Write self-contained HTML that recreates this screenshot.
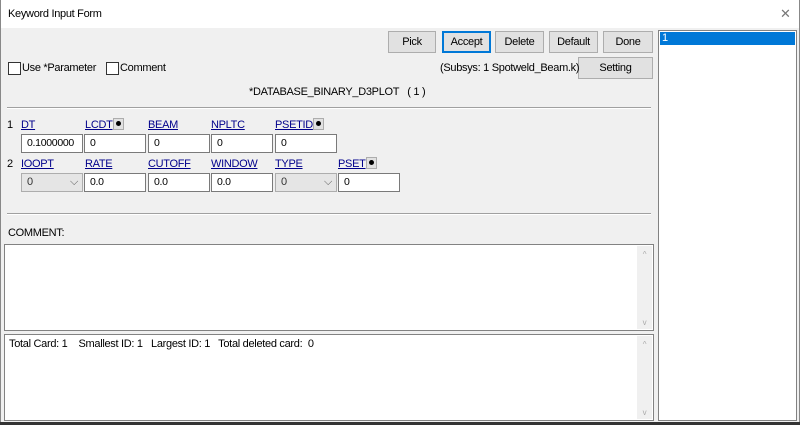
<!DOCTYPE html>
<html><head><style>
*{box-sizing:border-box;margin:0;padding:0}
body{width:800px;height:425px;background:#f0f0f0;font-family:"Liberation Sans",sans-serif;font-size:11px;letter-spacing:-0.3px;color:#000;position:relative;overflow:hidden}
.a{position:absolute}
.title{left:0;top:0;width:800px;height:28px;background:#fff}
.btn{position:absolute;background:#e1e1e1;border:1px solid #adadad;text-align:center;line-height:20px;font-size:11px}
.cb{position:absolute;width:13px;height:13px;border:1px solid #333;background:#fff}
.lbl{position:absolute;color:#00008b;text-decoration:underline;font-size:11px}
.inp{position:absolute;height:19px;background:#fff;border:1px solid #7a7a7a;padding-left:5px;line-height:17px;font-size:10.5px}
.sel{position:absolute;height:19px;background:#e5e5e5;border:1px solid #adadad;padding-left:5px;line-height:17px;color:#333}
.dot{position:absolute;width:11px;height:12px;background:#e1e1e1;border:1px solid #adadad}
.dot:after{content:"";position:absolute;left:2px;top:2px;width:5px;height:5px;border-radius:50%;background:#000}
.box{position:absolute;background:#fff;border:1px solid #828282}
.sb{position:absolute;right:1px;top:1px;bottom:1px;width:15px;background:#f0f0f0;color:#aaa;font-size:8px;text-align:center}
</style></head><body>
<div class="a title"></div>
<div class="a" style="left:0;top:0;width:1px;height:425px;background:#888"></div>
<div class="a" style="left:799px;top:0;width:1px;height:425px;background:#888"></div>
<div class="a" style="left:0;top:422px;width:800px;height:3px;background:#333"></div>
<div class="a" style="left:8px;top:8px;font-size:11px">Keyword Input Form</div>
<div class="a" style="left:780px;top:6px;font-size:13px;color:#777">✕</div>

<div class="btn" style="left:388px;top:31px;width:48px;height:22px">Pick</div>
<div class="btn" style="left:442px;top:31px;width:49px;height:22px;border:2px solid #0078d7;line-height:18px">Accept</div>
<div class="btn" style="left:495px;top:31px;width:49px;height:22px">Delete</div>
<div class="btn" style="left:549px;top:31px;width:49px;height:22px">Default</div>
<div class="btn" style="left:603px;top:31px;width:50px;height:22px">Done</div>
<div class="btn" style="left:578px;top:57px;width:75px;height:22px">Setting</div>
<div class="a" style="left:440px;top:62px">(Subsys: 1 Spotweld_Beam.k)</div>

<div class="cb" style="left:8px;top:62px"></div><div class="a" style="left:22px;top:62px">Use *Parameter</div>
<div class="cb" style="left:106px;top:62px"></div><div class="a" style="left:120px;top:62px">Comment</div>
<div class="a" style="left:249px;top:86px">*DATABASE_BINARY_D3PLOT &nbsp;&nbsp;( 1 )</div>
<div class="a" style="left:7px;top:107px;width:644px;height:2px;border-top:1px solid #a0a0a0;border-bottom:1px solid #fff"></div>

<div class="a" style="left:7px;top:119px">1</div>
<div class="lbl" style="left:21px;top:119px">DT</div>
<div class="lbl" style="left:85px;top:119px">LCDT</div><div class="dot" style="left:113px;top:118px"></div>
<div class="lbl" style="left:148px;top:119px">BEAM</div>
<div class="lbl" style="left:211px;top:119px">NPLTC</div>
<div class="lbl" style="left:275px;top:119px">PSETID</div><div class="dot" style="left:313px;top:118px"></div>
<div class="inp" style="left:21px;top:134px;width:62px">0.1000000</div>
<div class="inp" style="left:84px;top:134px;width:62px">0</div>
<div class="inp" style="left:148px;top:134px;width:62px">0</div>
<div class="inp" style="left:211px;top:134px;width:62px">0</div>
<div class="inp" style="left:275px;top:134px;width:62px">0</div>

<div class="a" style="left:7px;top:158px">2</div>
<div class="lbl" style="left:21px;top:158px">IOOPT</div>
<div class="lbl" style="left:85px;top:158px">RATE</div>
<div class="lbl" style="left:148px;top:158px">CUTOFF</div>
<div class="lbl" style="left:211px;top:158px">WINDOW</div>
<div class="lbl" style="left:275px;top:158px">TYPE</div>
<div class="lbl" style="left:338px;top:158px">PSET</div><div class="dot" style="left:366px;top:157px"></div>
<div class="sel" style="left:21px;top:173px;width:62px">0<span style="position:absolute;right:4px;top:0;color:#555">⌵</span></div>
<div class="inp" style="left:84px;top:173px;width:62px">0.0</div>
<div class="inp" style="left:148px;top:173px;width:62px">0.0</div>
<div class="inp" style="left:211px;top:173px;width:62px">0.0</div>
<div class="sel" style="left:275px;top:173px;width:62px">0<span style="position:absolute;right:4px;top:0;color:#555">⌵</span></div>
<div class="inp" style="left:338px;top:173px;width:62px">0</div>

<div class="a" style="left:7px;top:213px;width:644px;height:2px;border-top:1px solid #a0a0a0;border-bottom:1px solid #fff"></div>
<div class="a" style="left:8px;top:227px">COMMENT:</div>
<div class="box" style="left:4px;top:244px;width:650px;height:87px"><div class="sb"><div style="margin-top:4px">^</div><div style="position:absolute;bottom:2px;width:100%">v</div></div></div>
<div class="box" style="left:4px;top:334px;width:650px;height:87px"><div style="position:absolute;left:4px;top:3px">Total Card: 1 &nbsp;&nbsp; Smallest ID: 1 &nbsp; Largest ID: 1 &nbsp; Total deleted card: &nbsp;0</div><div class="sb"><div style="margin-top:4px">^</div><div style="position:absolute;bottom:2px;width:100%">v</div></div></div>

<div class="box" style="left:658px;top:30px;width:139px;height:391px"><div style="background:#0078d7;color:#fff;height:13px;line-height:13px;padding-left:2px;margin:1px">1</div></div>
</body></html>
